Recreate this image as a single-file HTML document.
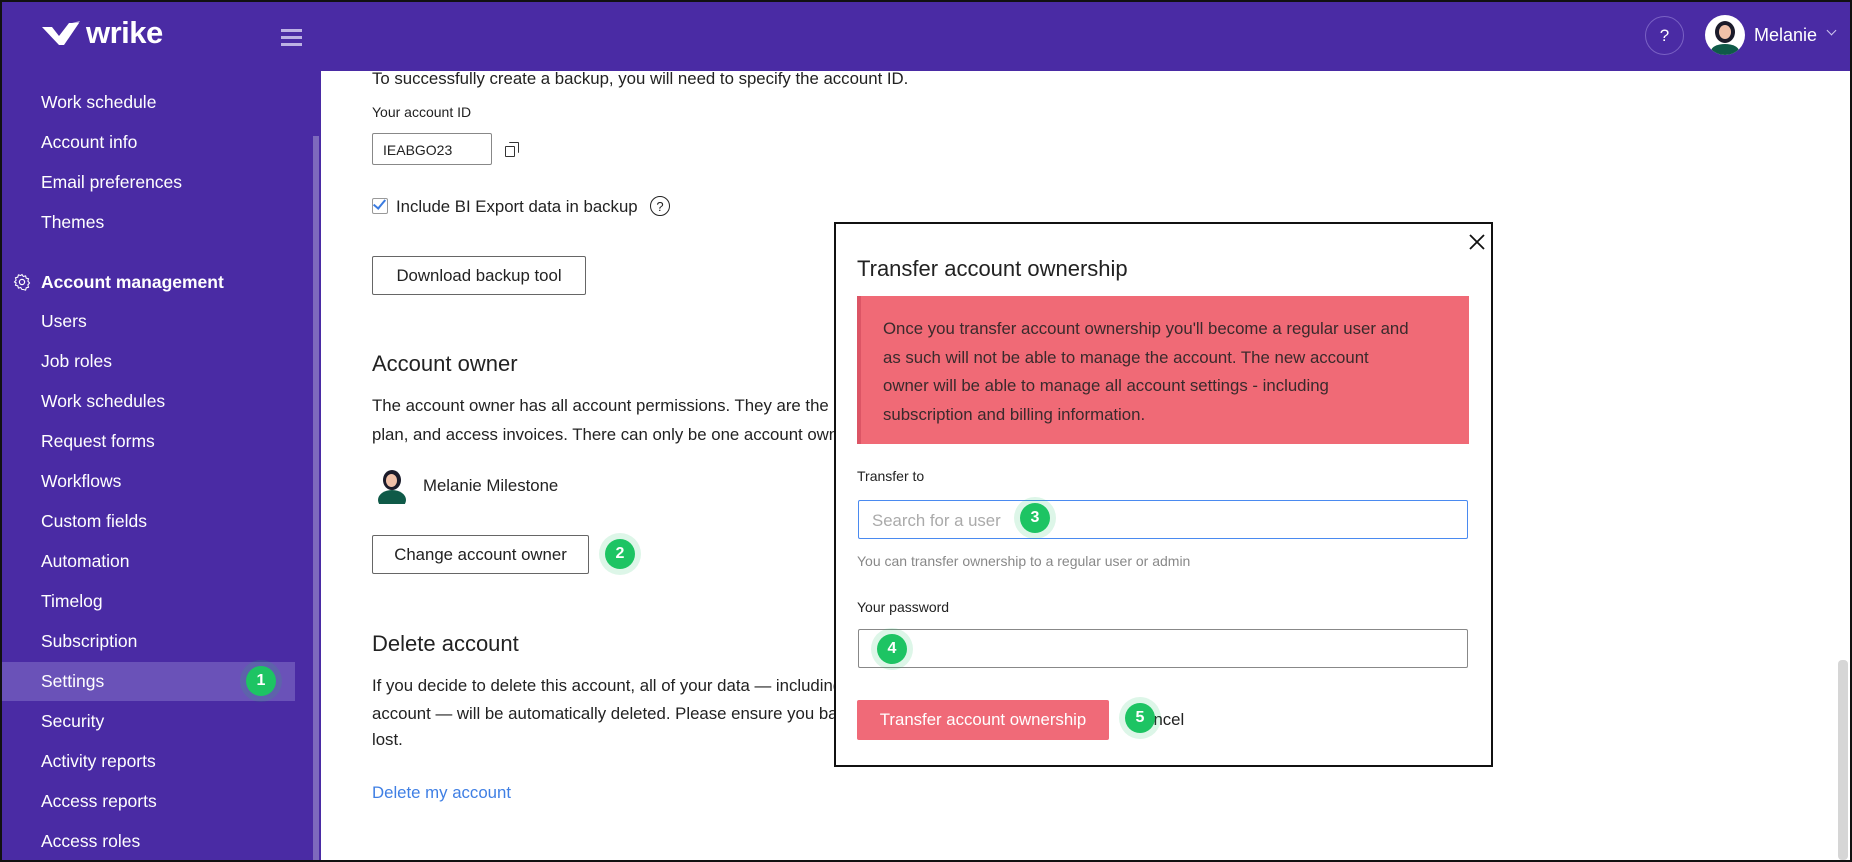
<!DOCTYPE html>
<html style="overflow:hidden;width:1852px;height:862px"><head><meta charset="utf-8"><style>
*{box-sizing:border-box;margin:0;padding:0}
body{width:1852px;height:862px;overflow:hidden;font-family:"Liberation Sans",sans-serif;background:#fff;position:relative;color:#222}
.frame{position:absolute;inset:0;border:2px solid #111;z-index:50;pointer-events:none}
.hdr{position:absolute;left:0;top:0;width:1852px;height:71px;background:#4a2ba4}
.side{position:absolute;left:0;top:71px;width:321px;height:791px;background:#4a2ba4;overflow:hidden}
.sb{position:absolute;left:313px;top:65px;width:6px;height:726px;background:#7d69bd}
.nav{position:absolute;left:41px;color:#fff;font-size:17.5px;line-height:20px}
.t{position:absolute;font-size:16.8px;color:#222;white-space:nowrap}
.btn{position:absolute;border:1px solid #666;border-radius:2px;background:#fff;font-size:16.8px;display:flex;align-items:center;justify-content:center;color:#222}
.badge{position:absolute;width:30px;height:30px;border-radius:50%;background:#1dc463;color:#fff;font-weight:bold;font-size:16px;display:flex;align-items:center;justify-content:center;box-shadow:0 0 0 6px rgba(29,196,99,.15)}
.modal{position:absolute;left:834px;top:222px;width:659px;height:545px;border:2px solid #111;background:#fff}
</style></head><body>
<div class="frame"></div>
<div class="hdr">
 <svg style="position:absolute;left:42px;top:21px" width="44" height="26" viewBox="0 0 44 26"><path d="M0 6 L10 6 L17 15 L27 2 L37 2 L22 24 L17 24 Z" fill="#fff"/><path d="M30 2 L38 0 L26 18 Z" fill="#fff" opacity=".7"/></svg>
 <div style="position:absolute;left:86px;top:15px;color:#fff;font-weight:bold;font-size:31px;letter-spacing:-.5px">wrike</div>
 <div style="position:absolute;left:281px;top:29px;width:21px;height:3px;background:#bdb2e4;box-shadow:0 7px 0 #bdb2e4,0 14px 0 #bdb2e4"></div>
 <div style="position:absolute;left:1645px;top:16px;width:39px;height:39px;border:1px solid #7a62c4;border-radius:50%;color:#fff;font-size:17px;display:flex;align-items:center;justify-content:center">?</div>
 <div style="position:absolute;left:1705px;top:15px;width:40px;height:40px;border-radius:50%;background:#fff;overflow:hidden">
  <div style="position:absolute;left:10px;top:6px;width:20px;height:22px;border-radius:50%;background:#1b1b2a"></div>
  <div style="position:absolute;left:14px;top:10px;width:12px;height:14px;border-radius:50%;background:#f0c0a8"></div>
  <div style="position:absolute;left:6px;top:29px;width:28px;height:14px;border-radius:50%;background:#0f5a48"></div>
 </div>
 <div style="position:absolute;left:1754px;top:25px;color:#fff;font-size:18px">Melanie</div>
 <div style="position:absolute;left:1828px;top:27px;width:7px;height:7px;border-right:1px solid #cfc6ee;border-bottom:1px solid #cfc6ee;transform:rotate(45deg)"></div>
</div>
<div class="side">
 <div class="sb"></div>
 <div style="position:absolute;left:0;top:591px;width:295px;height:39px;background:#6a52b8"></div>
</div>
<div class="nav" style="top:92px">Work schedule</div>
<div class="nav" style="top:132px">Account info</div>
<div class="nav" style="top:172px">Email preferences</div>
<div class="nav" style="top:212px">Themes</div>
<svg style="position:absolute;left:13px;top:273px" width="18" height="18" viewBox="0 0 18 18"><circle cx="9" cy="9" r="2.6" fill="none" stroke="#fff" stroke-width="1.2"/><path d="M9 1.5l1.3 2 2.3-.6.6 2.3 2.3.6-.6 2.3 1.6 1.9-1.6 1.9.6 2.3-2.3.6-.6 2.3-2.3-.6L9 16.5l-1.3-2-2.3.6-.6-2.3-2.3-.6.6-2.3L1.5 9l1.6-1.9-.6-2.3 2.3-.6.6-2.3 2.3.6z" fill="none" stroke="#fff" stroke-width="1.1"/></svg>
<div class="nav" style="top:272px;font-weight:bold">Account management</div>
<div class="nav" style="top:311px">Users</div>
<div class="nav" style="top:351px">Job roles</div>
<div class="nav" style="top:391px">Work schedules</div>
<div class="nav" style="top:431px">Request forms</div>
<div class="nav" style="top:471px">Workflows</div>
<div class="nav" style="top:511px">Custom fields</div>
<div class="nav" style="top:551px">Automation</div>
<div class="nav" style="top:591px">Timelog</div>
<div class="nav" style="top:631px">Subscription</div>
<div class="nav" style="top:671px">Settings</div>
<div class="nav" style="top:711px">Security</div>
<div class="nav" style="top:751px">Activity reports</div>
<div class="nav" style="top:791px">Access reports</div>
<div class="nav" style="top:831px">Access roles</div>
<div class="badge" style="left:246px;top:666px">1</div>

<div style="position:absolute;left:1838px;top:660px;width:10px;height:200px;background:#d6d6d6;border-radius:4px"></div>
<div class="t" style="left:372px;top:69px">To successfully create a backup, you will need to specify the account ID.</div>
<div class="t" style="left:372px;top:104px;font-size:14px">Your account ID</div>
<div style="position:absolute;left:372px;top:133px;width:120px;height:32px;border:1px solid #888;border-radius:2px;font-size:14px;padding:8px 0 0 10px">IEABGO23</div>
<div style="position:absolute;left:505px;top:146px;width:10px;height:11px;border:1.5px solid #333;border-radius:1px;background:#fff"></div>
<div style="position:absolute;left:509px;top:142px;width:10px;height:11px;border:1.5px solid #333;border-radius:1px;border-left:none;border-bottom:none"></div>
<div style="position:absolute;left:372px;top:198px;width:16px;height:16px;border:1px solid #999;border-radius:2px"></div>
<div style="position:absolute;left:376px;top:197px;width:7px;height:12px;border-right:2.5px solid #3a7be0;border-bottom:2.5px solid #3a7be0;transform:rotate(40deg)"></div>
<div class="t" style="left:396px;top:197px">Include BI Export data in backup</div>
<div style="position:absolute;left:650px;top:196px;width:20px;height:20px;border:1.5px solid #222;border-radius:50%;font-size:13px;display:flex;align-items:center;justify-content:center">?</div>
<div class="btn" style="left:372px;top:256px;width:214px;height:39px">Download backup tool</div>
<div class="t" style="left:372px;top:351px;font-size:22px">Account owner</div>
<div class="t" style="left:372px;top:396px">The account owner has all account permissions. They are the only one who can change the</div>
<div class="t" style="left:372px;top:425px">plan, and access invoices. There can only be one account owner.</div>
<div style="position:absolute;left:377px;top:470px;width:30px;height:34px;overflow:hidden">
 <div style="position:absolute;left:6px;top:0;width:18px;height:20px;border-radius:50%;background:#1b1b2a"></div>
 <div style="position:absolute;left:9px;top:4px;width:11px;height:13px;border-radius:50%;background:#f0c0a8"></div>
 <div style="position:absolute;left:1px;top:20px;width:28px;height:20px;border-radius:50%;background:#0f5a48"></div>
</div>
<div class="t" style="left:423px;top:476px">Melanie Milestone</div>
<div class="btn" style="left:372px;top:535px;width:217px;height:39px">Change account owner</div>
<div class="badge" style="left:605px;top:539px">2</div>
<div class="t" style="left:372px;top:631px;font-size:22px">Delete account</div>
<div class="t" style="left:372px;top:676px">If you decide to delete this account, all of your data — including that of other users in the</div>
<div class="t" style="left:372px;top:704px">account — will be automatically deleted. Please ensure you back up your data, or it will be</div>
<div class="t" style="left:372px;top:730px">lost.</div>
<div class="t" style="left:372px;top:783px;color:#3f7fe4">Delete my account</div>

<div class="modal">
 <svg style="position:absolute;left:632px;top:9px" width="18" height="18" viewBox="0 0 18 18"><path d="M2 2L16 16M16 2L2 16" stroke="#111" stroke-width="1.8"/></svg>
 <div style="position:absolute;left:21px;top:32px;font-size:22px;color:#222">Transfer account ownership</div>
 <div style="position:absolute;left:21px;top:72px;width:612px;height:148px;background:#f06a76;border-left:4px solid #dc5565;padding:19px 0 0 22px;font-size:16.8px;line-height:28.5px;color:#3a2a2c">Once you transfer account ownership you'll become a regular user and<br>as such will not be able to manage the account. The new account<br>owner will be able to manage all account settings - including<br>subscription and billing information.</div>
 <div style="position:absolute;left:21px;top:244px;font-size:14px">Transfer to</div>
 <div style="position:absolute;left:22px;top:276px;width:610px;height:39px;border:1.5px solid #4a8af0;border-radius:2px;font-size:16.8px;color:#aaa;padding:10px 0 0 13px">Search for a user</div>
 <div class="badge" style="left:184px;top:279px">3</div>
 <div style="position:absolute;left:21px;top:329px;font-size:14px;color:#888">You can transfer ownership to a regular user or admin</div>
 <div style="position:absolute;left:21px;top:375px;font-size:14px">Your password</div>
 <div style="position:absolute;left:22px;top:405px;width:610px;height:39px;border:1px solid #888;border-radius:2px"></div>
 <div class="badge" style="left:41px;top:410px">4</div>
 <div style="position:absolute;left:21px;top:476px;width:252px;height:40px;background:#f06a78;border-radius:2px;color:#fff;font-size:16.8px;display:flex;align-items:center;justify-content:center">Transfer account ownership</div>
 <div style="position:absolute;left:296px;top:486px;font-size:16.8px">Cancel</div>
 <div class="badge" style="left:289px;top:479px">5</div>
</div>
</body></html>
